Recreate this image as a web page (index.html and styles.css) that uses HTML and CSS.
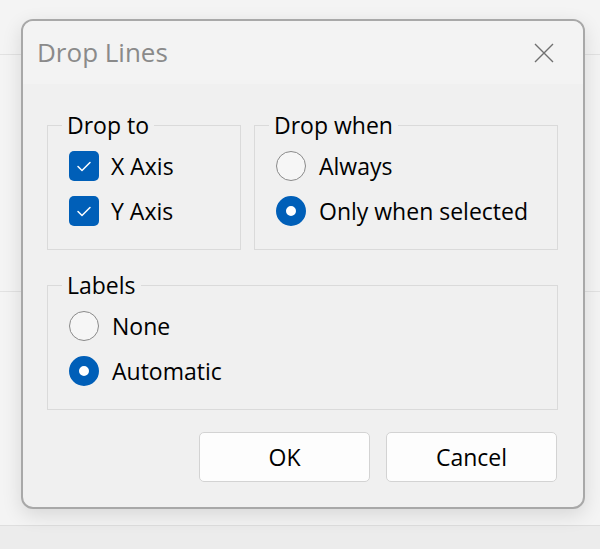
FILE: index.html
```html
<!DOCTYPE html>
<html>
<head>
<meta charset="utf-8">
<link rel="stylesheet" href="styles.css">
</head>
<body>
<div class="dialog">
  <div class="titlebar">
    <span class="title">Drop Lines</span>
    <span class="close"><svg width="20" height="20" viewBox="0 0 20 20"><path d="M1 1 L19 19 M19 1 L1 19" stroke="#707070" stroke-width="1.4" fill="none"/></svg></span>
  </div>
  <div class="content">
    <div class="toprow">
      <fieldset class="group g-to">
        <legend>Drop to</legend>
        <div class="opt"><span class="check"><svg width="30" height="30" viewBox="0 0 30 30"><path d="M9 15.5 L13 19.5 L21 11.5" stroke="#fff" stroke-width="1.5" fill="none" stroke-linecap="round" stroke-linejoin="round"/></svg></span><span>X Axis</span></div>
        <div class="opt"><span class="check"><svg width="30" height="30" viewBox="0 0 30 30"><path d="M9 15.5 L13 19.5 L21 11.5" stroke="#fff" stroke-width="1.5" fill="none" stroke-linecap="round" stroke-linejoin="round"/></svg></span><span>Y Axis</span></div>
      </fieldset>
      <fieldset class="group g-when">
        <legend>Drop when</legend>
        <div class="opt"><span class="radio"></span><span>Always</span></div>
        <div class="opt"><span class="radio on"></span><span>Only when selected</span></div>
      </fieldset>
    </div>
    <fieldset class="group g-labels">
      <legend>Labels</legend>
      <div class="opt"><span class="radio"></span><span>None</span></div>
      <div class="opt"><span class="radio on"></span><span>Automatic</span></div>
    </fieldset>
    <div class="buttons">
      <button class="btn">OK</button>
      <button class="btn">Cancel</button>
    </div>
  </div>
</div>
</body>
</html>
```
FILE: styles.css
```css
html, body {
  margin: 0;
  padding: 0;
}
body {
  width: 600px;
  height: 549px;
  overflow: hidden;
  font-family: "Open Sans", "Noto Sans", sans-serif;
  background:
    linear-gradient(#e2e2e2, #e2e2e2) 0 54px / 100% 1px no-repeat,
    linear-gradient(#e2e2e2, #e2e2e2) 0 291px / 100% 1px no-repeat,
    linear-gradient(#dedede, #dedede) 0 525px / 100% 1px no-repeat,
    linear-gradient(#ececec, #ececec) 0 526px / 100% 23px no-repeat,
    #f4f4f4;
  padding-top: 19px;
  padding-left: 21px;
  box-sizing: border-box;
}
.dialog {
  width: 564px;
  height: 490px;
  box-sizing: border-box;
  border: 2px solid #a8a8a8;
  border-radius: 12px;
  background: #f0f0f0;
  overflow: hidden;
  box-shadow: 0 6px 20px rgba(0,0,0,0.12);
  display: flex;
  flex-direction: column;
}
.titlebar {
  height: 63px;
  background: #f3f3f3;
  display: flex;
  align-items: center;
  justify-content: space-between;
  padding: 0 29px 0 14px;
}
.title {
  font-size: 26px;
  color: #8a8a8a;
  margin-top: -2px;
}
.close {
  display: flex;
  width: 20px;
  height: 20px;
}
.content {
  padding: 27px 25px 0 24px;
  display: flex;
  flex-direction: column;
}
.toprow {
  display: flex;
  gap: 13px;
}
.group {
  margin: 0;
  border: 1px solid #dadada;
  padding: 4px 0 16px 21px;
  min-width: 0;
}
.group legend {
  font-size: 23px;
  line-height: 28px;
  padding: 0 5px;
  margin-left: -7px;
  color: #000;
}
.g-to {
  width: 194px;
  box-sizing: border-box;
}
.g-when {
  width: 304px;
  box-sizing: border-box;
}
.g-labels {
  margin-top: 21px;
  width: 511px;
  box-sizing: border-box;
}
.opt {
  height: 45px;
  display: flex;
  align-items: center;
  gap: 12px;
  font-size: 23px;
  color: #000;
}
.check {
  width: 30px;
  height: 30px;
  border-radius: 5px;
  background: #005fb8;
  display: flex;
  flex: none;
}
.radio {
  width: 30px;
  height: 30px;
  border-radius: 50%;
  box-sizing: border-box;
  border: 1.5px solid #8a8a8a;
  background: #f6f6f6;
  flex: none;
  margin-right: 1px;
}
.radio.on {
  border: 10px solid #005fb8;
  background: #ffffff;
}
.buttons {
  display: flex;
  justify-content: flex-end;
  gap: 16px;
  margin-top: 22px;
  padding-right: 1px;
}
.btn {
  width: 171px;
  height: 50px;
  background: #fdfdfd;
  border: 1px solid #d3d3d3;
  border-radius: 5px;
  font-family: "Open Sans", "Noto Sans", sans-serif;
  font-size: 23px;
  color: #000;
  padding: 0;
}
```
